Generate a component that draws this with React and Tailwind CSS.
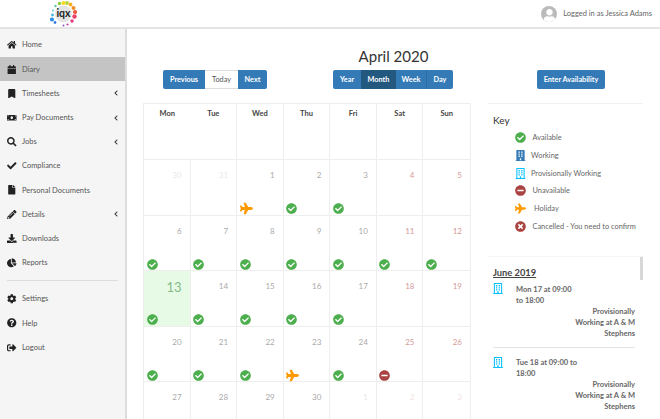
import {
  FaHome,
  FaCalendar,
  FaBookmark,
  FaMoneyBill,
  FaSearch,
  FaCheck,
  FaFile,
  FaPencilAlt,
  FaDownload,
  FaChartPie,
  FaCog,
  FaQuestionCircle,
  FaSignOutAlt,
  FaChevronLeft,
  FaCheckCircle,
  FaBuilding,
  FaRegBuilding,
  FaMinusCircle,
  FaPlane,
  FaTimesCircle,
  FaUser,
} from "react-icons/fa";

const navTop = [
  { label: "Home", icon: FaHome },
  { label: "Diary", icon: FaCalendar, active: true },
  { label: "Timesheets", icon: FaBookmark, more: true },
  { label: "Pay Documents", icon: FaMoneyBill, more: true },
  { label: "Jobs", icon: FaSearch, more: true },
  { label: "Compliance", icon: FaCheck },
  { label: "Personal Documents", icon: FaFile },
  { label: "Details", icon: FaPencilAlt, more: true },
  { label: "Downloads", icon: FaDownload },
  { label: "Reports", icon: FaChartPie },
];

const navBottom = [
  { label: "Settings", icon: FaCog },
  { label: "Help", icon: FaQuestionCircle },
  { label: "Logout", icon: FaSignOutAlt },
];

const weeks = [
  [
    { d: 30, off: true },
    { d: 31, off: true },
    { d: 1, s: "holiday" },
    { d: 2, s: "ok" },
    { d: 3, s: "ok" },
    { d: 4, end: true },
    { d: 5, end: true },
  ],
  [
    { d: 6, s: "ok" },
    { d: 7, s: "ok" },
    { d: 8, s: "ok" },
    { d: 9, s: "ok" },
    { d: 10, s: "ok" },
    { d: 11, s: "ok", end: true },
    { d: 12, s: "ok", end: true },
  ],
  [
    { d: 13, s: "ok", today: true },
    { d: 14, s: "ok" },
    { d: 15, s: "ok" },
    { d: 16, s: "ok" },
    { d: 17, s: "ok" },
    { d: 18, end: true },
    { d: 19, end: true },
  ],
  [
    { d: 20, s: "ok" },
    { d: 21, s: "ok" },
    { d: 22, s: "ok" },
    { d: 23, s: "holiday" },
    { d: 24, s: "ok" },
    { d: 25, s: "no", end: true },
    { d: 26, end: true },
  ],
  [
    { d: 27 },
    { d: 28 },
    { d: 29 },
    { d: 30 },
    { d: 1, off: true },
    { d: 2, off: true, end: true },
    { d: 3, off: true, end: true },
  ],
];

const legend = [
  { label: "Available", icon: FaCheckCircle, color: "text-[#4cae4c]", gap: "ml-[6.5px]" },
  { label: "Working", icon: FaBuilding, color: "text-[#337ab7]", gap: "ml-[5px]" },
  { label: "Provisionally Working", icon: FaRegBuilding, color: "text-[#00bfff]", gap: "ml-[5px]" },
  { label: "Unavailable", icon: FaMinusCircle, color: "text-[#a94442]", gap: "ml-[6.5px]" },
  { label: "Holiday", icon: FaPlane, color: "text-[#f90]", gap: "ml-[8px]" },
  { label: "Cancelled - You need to confirm", icon: FaTimesCircle, color: "text-[#a94442]", gap: "ml-[6.5px]" },
];

function NavItem({ item }) {
  const Icon = item.icon;
  return (
    <div
      className={`flex h-[24.2px] items-center pl-[7px] pr-[7px] text-[7.5px] ${
        item.active ? "bg-[#c4c4c4]" : ""
      }`}
    >
      <span className="flex w-[15px] justify-start text-[#222]">
        <Icon className="h-[9.5px] w-[9.5px]" />
      </span>
      <span className="text-[#555]">{item.label}</span>
      {item.more ? <FaChevronLeft className="ml-auto h-[6px] w-[4px] text-[#333]" /> : null}
    </div>
  );
}

function StatusIcon({ s }) {
  if (s === "ok") return <FaCheckCircle className="h-[11px] w-[11px] text-[#4cae4c]" />;
  if (s === "no") return <FaMinusCircle className="h-[11px] w-[11px] text-[#a94442]" />;
  if (s === "holiday") return <FaPlane className="h-[13px] w-[13px] text-[#f90]" />;
  return null;
}

function DayCell({ day }) {
  let tone = "text-[#aaa]";
  if (day.end) tone = day.off ? "text-[#f3e4e4]" : "text-[#d49a9a]";
  else if (day.off) tone = "text-[#e8e8e8]";
  return (
    <div
      className={`flex h-[55.5px] flex-col border-b border-r border-[#eee] pl-[2.5px] pr-[8px] pt-[9px] last:border-r-0 ${
        day.today ? "bg-[#e6fae6]" : ""
      }`}
    >
      <div
        className={`text-right leading-[13px] ${
          day.today ? "pt-[1px] text-[13px] text-[#86b986]" : `text-[8px] ${tone}`
        }`}
      >
        {day.d}
      </div>
      <div className="mt-auto flex h-[12px] items-center">
        <StatusIcon s={day.s} />
      </div>
    </div>
  );
}

function Logo() {
  const dots = [
    ["#f7d91e", 0, -11, 2],
    ["#b6d334", 3.5, -11, 1.9],
    ["#f5b324", 7, -9.5, 1.9],
    ["#f08a24", 10, -6, 2],
    ["#ef5a3a", 11.5, -2, 2.1],
    ["#ee3f6b", 11, 2.5, 2.2],
    ["#e9347f", 8.5, 7, 1.7],
    ["#c93aa5", 4, 10.5, 1.1],
    ["#8e4bc4", 0, 11.5, 1],
    ["#8ccf3f", -4, -10.5, 1.7],
    ["#5cc3a6", -8, -8, 1.2],
    ["#6cc9e6", -10.5, -3.5, 1.1],
    ["#3fb4ea", -11, 1, 1.4],
    ["#2f8fe6", -11.5, 5.5, 2.1],
    ["#3a7be0", -8.5, 8.5, 1.4],
  ];
  return (
    <div className="relative ml-[50px] h-[26px] w-[27px]">
      <svg viewBox="-13.5 -13 27 26" className="h-[26px] w-[27px]">
        <circle r="8.5" fill="#e4e4e4" />
        {dots.map(([fill, cx, cy, r]) => (
          <circle key={`${cx}-${cy}`} cx={cx} cy={cy} r={r} fill={fill} />
        ))}
      </svg>
      <span className="absolute inset-0 flex items-center justify-center text-[10.5px] font-bold leading-none text-[#222]">
        iqx
      </span>
    </div>
  );
}

function Booking({ first, second }) {
  return (
    <div className="pb-[8px] text-[7.5px] font-bold leading-[11px] text-[#666]">
      <div className="flex">
        <FaRegBuilding className="h-[11px] w-[10px] shrink-0 text-[#00bfff]" />
        <div className="ml-[13px] pt-[0.5px]">
          <div>{first}</div>
          <div>{second}</div>
        </div>
      </div>
      <div className="ml-auto w-[60px] text-right">Provisionally Working at A &amp; M Stephens</div>
    </div>
  );
}

export default function App() {
  return (
    <div className="flex h-[419px] w-[660px] flex-col overflow-hidden bg-white font-['Lato',sans-serif] text-[#555]">
      <header className="flex h-[29px] shrink-0 items-center border-b-2 border-[#e4e4e4] pr-[8px]">
        <Logo />
        <div className="ml-auto flex items-center gap-[6px] text-[7.5px] text-[#666]">
          <div className="flex h-[16px] w-[16px] items-end justify-center overflow-hidden rounded-full bg-[#bbb]">
            <FaUser className="h-[13px] w-[13px] text-white" />
          </div>
          <span>Logged in as Jessica Adams</span>
        </div>
      </header>

      <div className="flex min-h-0 flex-1">
        <aside className="w-[127px] shrink-0 border-r-2 border-[#ddd] bg-[#f5f5f5] pt-[4px]">
          {navTop.map((item) => (
            <NavItem key={item.label} item={item} />
          ))}
          <div className="mx-[7px] mb-[6px] mt-[5px] border-t border-[#ddd]" />
          {navBottom.map((item) => (
            <NavItem key={item.label} item={item} />
          ))}
        </aside>

        <main className="min-w-0 flex-1">
          <h1 className="mb-[2px] pt-[15px] text-center text-[15px] leading-[24px] text-[#333]">April 2020</h1>

          <div className="flex pl-[36px]">
            <div className="flex h-[19px] overflow-hidden rounded-[2px] text-[7.3px] font-bold leading-[19px] text-white">
              <span className="w-[42px] bg-[#337ab7] text-center">Previous</span>
              <span className="w-[33px] border-y border-[#ddd] bg-white text-center font-normal leading-[17px] text-[#555]">
                Today
              </span>
              <span className="w-[29px] bg-[#337ab7] text-center">Next</span>
            </div>
            <div className="ml-[66px] flex h-[19px] overflow-hidden rounded-[2px] text-[7.3px] font-bold leading-[19px] text-white">
              <span className="w-[28px] bg-[#337ab7] text-center">Year</span>
              <span className="w-[35px] bg-[#23587f] text-center">Month</span>
              <span className="w-[31px] border-r border-[#2e6da4] bg-[#337ab7] text-center">Week</span>
              <span className="w-[26px] bg-[#337ab7] text-center">Day</span>
            </div>
            <div className="ml-[84px] h-[19px] w-[68px] rounded-[2px] bg-[#337ab7] text-center text-[7.3px] font-bold leading-[19px] text-white">
              Enter Availability
            </div>
          </div>

          <div className="mt-[14px] flex">
            <section className="ml-[16px] w-[328px] shrink-0 border-l border-r border-t border-[#eee]">
              <div className="grid grid-cols-7">
                {["Mon", "Tue", "Wed", "Thu", "Fri", "Sat", "Sun"].map((name, i) => (
                  <div
                    key={name}
                    className={`h-[56px] border-b border-[#eee] pt-[3px] text-center text-[7.5px] font-bold leading-[14px] text-[#444] ${
                      i > 0 && i < 6 ? "border-r" : ""
                    }`}
                  >
                    {name}
                  </div>
                ))}
              </div>
              {weeks.map((week) => (
                <div key={week[0].d} className="grid grid-cols-7">
                  {week.map((day) => (
                    <DayCell key={`${week[0].d}-${day.d}`} day={day} />
                  ))}
                </div>
              ))}
            </section>

            <section className="ml-[17px] w-[155px] shrink-0">
              <div className="border-t border-[#f2f2f2] pl-[5px] pt-[10px]">
                <div className="text-[10px] leading-[13px] text-[#333]">Key</div>
                <div className="pl-[21px] pt-[2px]">
                  {legend.map((row) => {
                    const Icon = row.icon;
                    return (
                      <div key={row.label} className="flex h-[17.7px] items-center text-[7.4px] text-[#666]">
                        <span className={`flex w-[12px] justify-center ${row.color}`}>
                          <Icon className="h-[11px] w-[11px]" />
                        </span>
                        <span className={`whitespace-nowrap ${row.gap}`}>{row.label}</span>
                      </div>
                    );
                  })}
                </div>
              </div>

              <div className="relative mt-[21px] h-[170px] overflow-hidden border-t border-[#f5f5f5] pl-[5px] pr-[8px] pt-[10px]">
                <div className="absolute right-0 top-0 h-[23px] w-[3px] bg-[#d8d8d8]" />
                <div className="text-[9.3px] font-bold leading-[12px] text-[#444] underline">June 2019</div>
                <div className="mt-[4px]">
                  <Booking first="Mon 17 at 09:00" second="to 18:00" />
                </div>
                <div className="mb-[9px] border-t border-[#e2e2e2]" />
                <Booking first="Tue 18 at 09:00 to" second="18:00" />
              </div>
            </section>
          </div>
        </main>
      </div>
    </div>
  );
}
